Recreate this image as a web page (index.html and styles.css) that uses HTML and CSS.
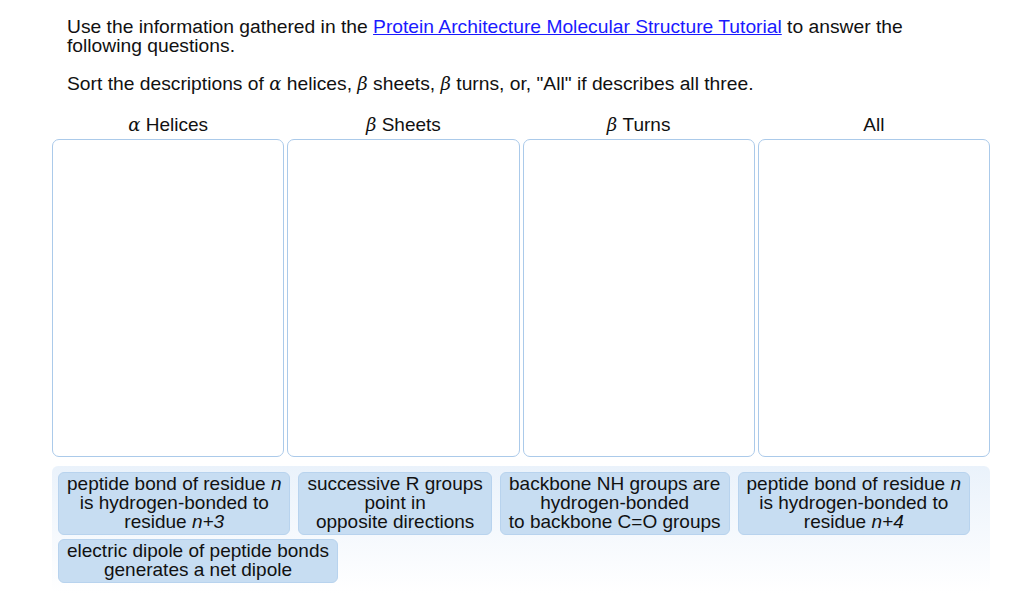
FILE: index.html
```html
<!DOCTYPE html>
<html lang="en">

<head>
    <meta charset="UTF-8">
    <title>Protein Architecture Sorting</title>
    <link rel="stylesheet" href="styles.css">
</head>

<body>
    <div class="page">
        <p class="intro">
            Use the information gathered in the <a href="#">Protein Architecture Molecular Structure Tutorial</a> to answer the<br>
            following questions.
        </p>
        <p class="intro prompt">
            Sort the descriptions of <i class="greek">α</i> helices, <i class="greek">β</i> sheets, <i class="greek">β</i> turns, or, "All" if describes all three.
        </p>

        <!-- Drop targets -->
        <div class="bins">
            <div class="bin">
                <div class="bin-label"><i class="greek">α</i> Helices</div>
                <div class="bin-box"></div>
            </div>
            <div class="bin">
                <div class="bin-label"><i class="greek">β</i> Sheets</div>
                <div class="bin-box"></div>
            </div>
            <div class="bin">
                <div class="bin-label"><i class="greek">β</i> Turns</div>
                <div class="bin-box"></div>
            </div>
            <div class="bin">
                <div class="bin-label">All</div>
                <div class="bin-box"></div>
            </div>
        </div>

        <!-- Draggable answers -->
        <div class="tray">
            <div class="token">peptide bond of residue <i>n</i><br>is hydrogen-bonded to<br>residue <i>n+3</i></div>
            <div class="token">successive R groups<br>point in<br>opposite directions</div>
            <div class="token">backbone NH groups are<br>hydrogen-bonded<br>to backbone C=O groups</div>
            <div class="token">peptide bond of residue <i>n</i><br>is hydrogen-bonded to<br>residue <i>n+4</i></div>
            <div class="token">electric dipole of peptide bonds<br>generates a net dipole</div>
        </div>
    </div>
</body>

</html>
```

FILE: styles.css
```css
body {
    margin: 0;
    padding: 0;
    background: #ffffff;
    color: #111111;
    font-family: 'Liberation Sans', Arial, sans-serif;
    font-size: 19px;
    line-height: 19px;
}

.page {
    width: 938px;
    padding: 17px 0 0 52px;
}

.intro {
    margin: 0 0 19px 15px;
    font-size: 19.25px;
}

.intro a {
    color: #1a1aff;
}

.prompt {
    margin-bottom: 0;
}

.greek {
    font-family: 'DejaVu Serif', serif;
    font-size: 18px;
}

.bins {
    display: grid;
    grid-template-columns: repeat(4, 1fr);
    gap: 3px;
    margin-top: 22px;
}

.bin-label {
    text-align: center;
    height: 24px;
}

.bin-box {
    height: 316px;
    border: 1.5px solid #abcaea;
    border-radius: 7px;
}

.tray {
    display: flex;
    flex-wrap: wrap;
    align-items: flex-start;
    gap: 4px 8px;
    margin-top: 9px;
    padding: 6px 6px 10px 6px;
    min-height: 93px;
    border-radius: 6px;
    background: linear-gradient(to bottom, #eaf2fb, #ffffff);
}

.token {
    padding: 1px 8px 3px;
    text-align: center;
    background-color: #c7ddf2;
    border: 1px solid #b8d3ee;
    border-radius: 6px;
}
```
